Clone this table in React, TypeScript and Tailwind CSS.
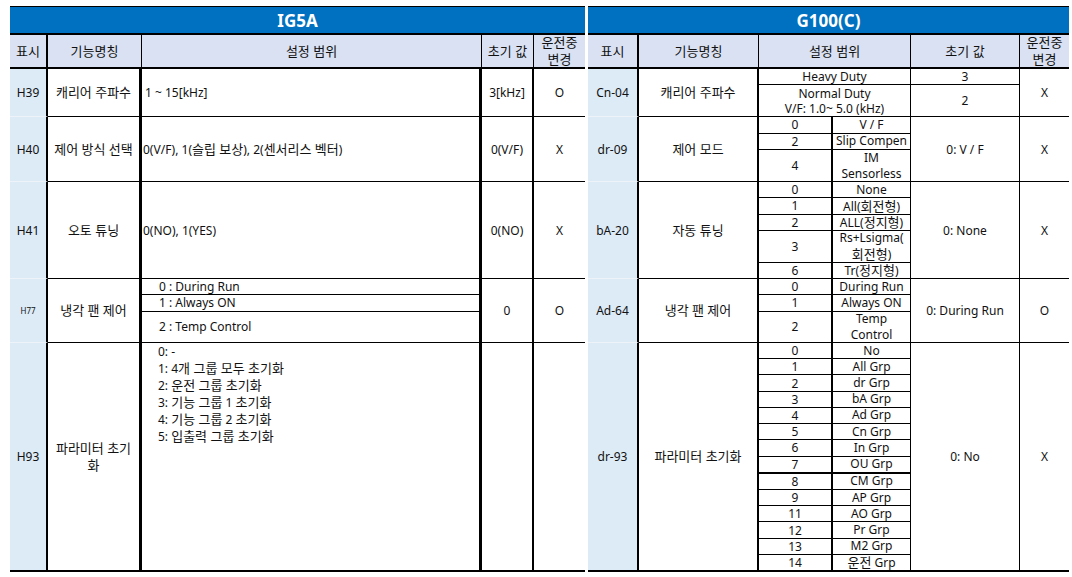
import React from "react";

type Sub = { n?: string; l: string; f: string; thick?: boolean };

// Hangul runs are drawn a bit larger so Noto CJK matches the wider Malgun-style glyphs
function T({ children }: { children: string }) {
  const lines = children.split("\n");
  return (
    <span>
      {lines.map((line, li) => (
        <React.Fragment key={li}>
          {li > 0 && <br />}
          {line.split(/([\uac00-\ud7a3]+(?:\s+[\uac00-\ud7a3]+)*)/).map((p, i) =>
            /[\uac00-\ud7a3]/.test(p) ? (
              <span key={i} className="text-[13px]">
                {p}
              </span>
            ) : (
              p
            )
          )}
        </React.Fragment>
      ))}
    </span>
  );
}

function Cell({ className = "", children }: { className?: string; children?: React.ReactNode }) {
  return (
    <div className={`flex shrink-0 items-center justify-center text-center ${className}`}>{children}</div>
  );
}

// split range cell: number | label, stacked sub rows
function SplitRange({ items }: { items: Sub[] }) {
  return (
    <div className="flex h-full w-full flex-col">
      {items.map((it, i) => (
        <div
          key={i}
          className={`flex min-h-0 ${it.f} ${
            i < items.length - 1 ? (it.thick ? "border-b-2 border-b-black" : "border-b border-b-black") : ""
          }`}
        >
          <div className="flex w-[74px] shrink-0 items-center justify-center border-r-2 border-r-black">{it.n}</div>
          <div className="flex flex-1 items-center justify-center text-center leading-[16px]">
            <T>{it.l}</T>
          </div>
        </div>
      ))}
    </div>
  );
}

function LRow({
  h,
  code,
  name,
  init,
  run,
  last,
  children,
  codeSize = "",
}: {
  h: string;
  code: string;
  name: string;
  init: string;
  run: string;
  last?: boolean;
  children: React.ReactNode;
  codeSize?: string;
}) {
  const b = last ? "border-b-2 border-b-black" : "border-b border-b-black";
  return (
    <div className={`flex ${h}`}>
      <Cell className={`w-[38px] bg-[#ddebf7] border-r-2 border-r-black ${last ? "border-b-2 border-b-black" : "border-b border-b-[#eef3f9]"} ${codeSize}`}>
        {code}
      </Cell>
      <Cell className={`w-[94px] border-r-[3px] border-r-black leading-[17px] ${b}`}>
        <T>{name}</T>
      </Cell>
      <div className={`flex w-[340px] shrink-0 border-r-[3px] border-r-black ${b}`}>{children}</div>
      <Cell className={`w-[52px] border-r-2 border-r-black ${b}`}>{init}</Cell>
      <Cell className={`w-[51px] ${b}`}>{run}</Cell>
    </div>
  );
}

function RRow({
  h,
  code,
  name,
  init,
  run,
  last,
  children,
}: {
  h: string;
  code: string;
  name: string;
  init: React.ReactNode;
  run: string;
  last?: boolean;
  children: React.ReactNode;
}) {
  const b = last ? "border-b-2 border-b-black" : "border-b border-b-black";
  return (
    <div className={`flex ${h}`}>
      <Cell className={`w-[51px] bg-[#ddebf7] border-r-2 border-r-black ${last ? "border-b-2 border-b-black" : "border-b border-b-[#eef3f9]"}`}>
        {code}
      </Cell>
      <Cell className={`w-[120px] border-r-2 border-r-black ${b}`}>
        <T>{name}</T>
      </Cell>
      <div className={`flex w-[152px] shrink-0 border-r border-r-black ${b}`}>{children}</div>
      <div className={`flex w-[109px] shrink-0 border-r border-r-black ${b}`}>{init}</div>
      <Cell className={`w-[49px] ${b}`}>{run}</Cell>
    </div>
  );
}

const dr09: Sub[] = [
  { n: "0", l: "V / F", f: "flex-1" },
  { n: "2", l: "Slip Compen", f: "flex-1" },
  { n: "4", l: "IM\nSensorless", f: "flex-[2]" },
];

const ba20: Sub[] = [
  { n: "0", l: "None", f: "flex-1" },
  { n: "1", l: "All(회전형)", f: "flex-1" },
  { n: "2", l: "ALL(정지형)", f: "flex-1" },
  { n: "3", l: "Rs+Lsigma(\n회전형)", f: "flex-[2]" },
  { n: "6", l: "Tr(정지형)", f: "flex-1" },
];

const ad64: Sub[] = [
  { n: "0", l: "During Run", f: "flex-1" },
  { n: "1", l: "Always ON", f: "flex-1" },
  { n: "2", l: "Temp\nControl", f: "flex-[2]" },
];

const dr93: Sub[] = [
  ["0", "No"],
  ["1", "All Grp"],
  ["2", "dr Grp"],
  ["3", "bA Grp"],
  ["4", "Ad Grp"],
  ["5", "Cn Grp"],
  ["6", "In Grp"],
  ["7", "OU Grp"],
  ["8", "CM Grp"],
  ["9", "AP Grp"],
  ["11", "AO Grp"],
  ["12", "Pr Grp"],
  ["13", "M2 Grp"],
  ["14", "운전 Grp"],
].map(([n, l], i) => ({ n, l, f: "flex-1", thick: i === 7 }));

const h93 = ["0: -", "1: 4개 그룹 모두 초기화", "2: 운전 그룹 초기화", "3: 기능 그룹 1 초기화", "4: 기능 그룹 2 초기화", "5: 입출력 그룹 초기화"];

export default function App() {
  return (
    <div className="min-h-screen bg-white font-['Noto_Sans','Noto_Sans_CJK_KR',sans-serif] text-[12px] leading-[15px] text-[#111]">
      <div className="flex gap-[3px] pl-[10px] pt-[6px]">
        {/* IG5A */}
        <div className="w-[575px] shrink-0">
          <div className="flex h-[29px] items-center justify-center border-t border-b-2 border-black bg-[#0070c0] text-[17px] font-bold text-white">
            IG5A
          </div>
          <div className="flex h-[34px] border-b-2 border-b-black bg-[#d9e1f2]">
            <Cell className="w-[38px] border-r-2 border-r-black"><T>표시</T></Cell>
            <Cell className="w-[94px] border-r border-r-black"><T>기능명칭</T></Cell>
            <Cell className="w-[340px] border-r border-r-black"><T>설정 범위</T></Cell>
            <Cell className="w-[52px] border-r border-r-black"><T>초기 값</T></Cell>
            <Cell className="w-[51px] leading-[16px]"><T>{"운전중\n변경"}</T></Cell>
          </div>

          <LRow h="h-[48px]" code="H39" name="캐리어 주파수" init="3[kHz]" run="O">
            <div className="flex items-center pl-[3px]">1 ~ 15[kHz]</div>
          </LRow>
          <LRow h="h-[65px]" code="H40" name="제어 방식 선택" init="0(V/F)" run="X">
            <div className="flex items-center pl-[1px]">
              <T>0(V/F), 1(슬립 보상), 2(센서리스 벡터)</T>
            </div>
          </LRow>
          <LRow h="h-[97px]" code="H41" name="오토 튜닝" init="0(NO)" run="X">
            <div className="flex items-center pl-[1px]">0(NO), 1(YES)</div>
          </LRow>
          <LRow h="h-[64px]" code="H77" codeSize="text-[8px]" name="냉각 팬 제어" init="0" run="O">
            <div className="flex w-full flex-col">
              <div className="flex flex-1 items-center border-b border-b-black pl-[17px]">0 : During Run</div>
              <div className="flex flex-1 items-center border-b border-b-black pl-[17px]">1 : Always ON</div>
              <div className="flex flex-[2] items-center pl-[17px]">2 : Temp Control</div>
            </div>
          </LRow>
          <LRow h="h-[229px]" last code="H93" name={"파라미터 초기\n화"} init="" run="">
            <div className="flex flex-col pl-[16px] pt-[1px] leading-[16px]">
              {h93.map((t) => (
                <div key={t}>
                  <T>{t}</T>
                </div>
              ))}
            </div>
          </LRow>
        </div>

        {/* G100(C) */}
        <div className="w-[481px] shrink-0">
          <div className="flex h-[29px] items-center justify-center border-t border-b-2 border-black bg-[#0070c0] text-[17px] font-bold text-white">
            G100(C)
          </div>
          <div className="flex h-[34px] border-b-2 border-b-black bg-[#d9e1f2]">
            <Cell className="w-[51px] border-r-2 border-r-black"><T>표시</T></Cell>
            <Cell className="w-[120px] border-r border-r-black"><T>기능명칭</T></Cell>
            <Cell className="w-[152px] border-r border-r-black"><T>설정 범위</T></Cell>
            <Cell className="w-[109px] border-r border-r-black"><T>초기 값</T></Cell>
            <Cell className="w-[49px] leading-[16px]"><T>{"운전중\n변경"}</T></Cell>
          </div>

          <RRow
            h="h-[48px]"
            code="Cn-04"
            name="캐리어 주파수"
            run="X"
            init={
              <div className="flex w-full flex-col">
                <div className="flex flex-1 items-center justify-center border-b border-b-black">3</div>
                <div className="flex flex-[2] items-center justify-center">2</div>
              </div>
            }
          >
            <div className="flex w-full flex-col">
              <div className="flex flex-1 items-center justify-center border-b border-b-black">Heavy Duty</div>
              <div className="flex flex-[2] items-center justify-center text-center leading-[15px]">
                <span>
                  Normal Duty<br />V/F: 1.0~ 5.0 (kHz)
                </span>
              </div>
            </div>
          </RRow>
          <RRow h="h-[65px]" code="dr-09" name="제어 모드" run="X" init={<Cell className="w-full">0: V / F</Cell>}>
            <SplitRange items={dr09} />
          </RRow>
          <RRow h="h-[97px]" code="bA-20" name="자동 튜닝" run="X" init={<Cell className="w-full">0: None</Cell>}>
            <SplitRange items={ba20} />
          </RRow>
          <RRow h="h-[64px]" code="Ad-64" name="냉각 팬 제어" run="O" init={<Cell className="w-full">0: During Run</Cell>}>
            <SplitRange items={ad64} />
          </RRow>
          <RRow h="h-[229px]" last code="dr-93" name="파라미터 초기화" run="X" init={<Cell className="w-full">0: No</Cell>}>
            <SplitRange items={dr93} />
          </RRow>
        </div>
      </div>
    </div>
  );
}
